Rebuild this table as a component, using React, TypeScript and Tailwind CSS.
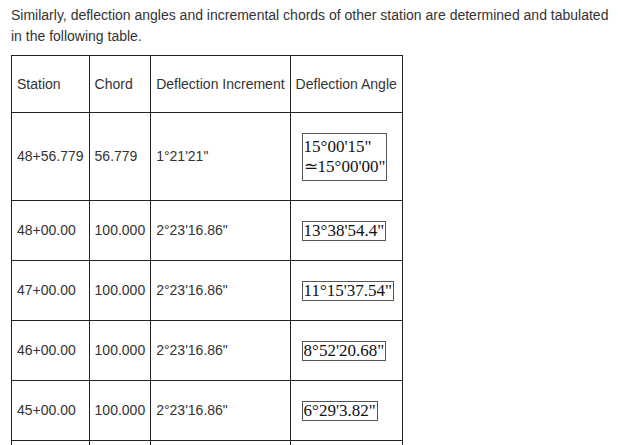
import React from "react";

const rows: { station: string; chord: string; inc: string; angle: string }[] = [
  { station: "48+00.00", chord: "100.000", inc: "2°23'16.86\"", angle: "13°38'54.4\"" },
  { station: "47+00.00", chord: "100.000", inc: "2°23'16.86\"", angle: "11°15'37.54\"" },
  { station: "46+00.00", chord: "100.000", inc: "2°23'16.86\"", angle: "8°52'20.68\"" },
  { station: "45+00.00", chord: "100.000", inc: "2°23'16.86\"", angle: "6°29'3.82\"" },
];

const td = "border border-[#222] px-[5px] py-0 align-middle whitespace-nowrap";
const serif = { fontFamily: "'Liberation Serif', 'Times New Roman', serif" };

export default function App() {
  return (
    <div
      className="h-[445px] overflow-hidden pl-[11px] pt-[5px] text-[14px] text-[#333] bg-white"
      style={{ fontFamily: "Arial, 'Liberation Sans', sans-serif" }}
    >
      <p className="leading-[21px]">
        Similarly, deflection angles and incremental chords of other station are determined and tabulated
        <br />
        in the following table.
      </p>
      <table className="mt-[8px] border-collapse leading-[17px]">
        <tbody>
          <tr className="h-[57px]">
            <td className={td}>Station</td>
            <td className={td}>Chord</td>
            <td className={td}>Deflection Increment</td>
            <td className={td}>Deflection Angle</td>
          </tr>
          <tr className="h-[88px]">
            <td className={td}>48+56.779</td>
            <td className={td}>56.779</td>
            <td className={td}>1°21'21"</td>
            <td className={td}>
              <span
                className="ml-[6px] inline-block border border-[#555] px-[1px] py-[3px] text-[17px] leading-[20px] text-[#111]"
                style={serif}
              >
                15°00'15"
                <br />
                ≃15°00'00"
              </span>
            </td>
          </tr>
          {rows.map((r) => (
            <tr key={r.station} className="h-[60px]">
              <td className={td}>{r.station}</td>
              <td className={td}>{r.chord}</td>
              <td className={td}>{r.inc}</td>
              <td className={td}>
                <span
                  className="ml-[6px] inline-block border border-[#555] px-[1px] text-[17px] leading-[18px] text-[#111]"
                  style={serif}
                >
                  {r.angle}
                </span>
              </td>
            </tr>
          ))}
          <tr className="h-[60px]">
            <td className={td}></td>
            <td className={td}></td>
            <td className={td}></td>
            <td className={td}></td>
          </tr>
        </tbody>
      </table>
    </div>
  );
}
